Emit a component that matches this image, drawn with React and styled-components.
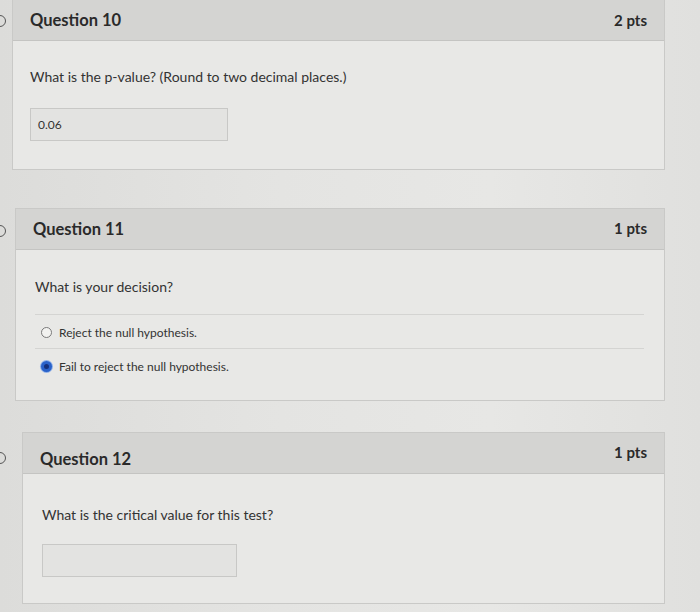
import React from 'react';
import styled, { createGlobalStyle } from 'styled-components';

const GlobalStyle = createGlobalStyle`
  html, body {
    margin: 0;
    padding: 0;
    background: #e3e3e1;
    font-family: Lato, "Open Sans", sans-serif;
    color: #2d2d2d;
  }
`;

const Page = styled.div`
  width: 700px;
  height: 612px;
  overflow: hidden;
  display: flex;
  flex-direction: column;
  background: linear-gradient(90deg, #dcdcda 0%, #e4e4e2 40%, #e7e7e5 70%, #e0e0de 100%);
`;

const Row = styled.div`
  position: relative;
  margin-top: ${p => p.top}px;
  padding-left: ${p => p.left}px;
  padding-right: ${p => p.right}px;
`;

// the partial flag icon cut at the left edge
const Flag = styled.div`
  position: absolute;
  left: -8px;
  top: ${p => p.y}px;
  width: 14px;
  height: 12px;
  border: 1.5px solid #555;
  border-radius: 0 7px 7px 0;
  box-sizing: border-box;
`;

const Card = styled.div`
  border: 1px solid #c9c9c7;
  background: #e8e8e6;
  height: ${p => p.h}px;
  box-sizing: border-box;
`;

const Header = styled.div`
  height: 41px;
  display: flex;
  justify-content: space-between;
  align-items: flex-start;
  padding: 0 17px 0 ${p => p.pl}px;
  background: #d4d4d2;
  border-bottom: 1px solid #c4c4c2;
  box-sizing: border-box;
`;

const Title = styled.div`
  font-size: 16.5px;
  font-weight: 700;
  color: #2a2a2a;
  margin-top: ${p => p.mt}px;
`;

const Pts = styled.div`
  font-size: 15px;
  font-weight: 700;
  color: #2a2a2a;
  margin-top: ${p => p.mt}px;
`;

const Body = styled.div`
  padding: ${p => p.pt}px 20px 0 ${p => p.pl}px;
`;

const Prompt = styled.div`
  font-size: 14px;
  color: #333;
  line-height: 18px;
`;

const Input = styled.div`
  margin-top: ${p => p.mt}px;
  width: ${p => p.w}px;
  height: 33px;
  border: 1px solid #c8c8c6;
  background: #e3e3e1;
  box-sizing: border-box;
  display: flex;
  align-items: center;
  padding-left: 7px;
  font-size: 12px;
  color: #333;
`;

const Options = styled.div`
  margin-top: 18px;
  border-top: 1px solid #d4d4d2;
`;

const Option = styled.div`
  display: flex;
  align-items: center;
  gap: 7px;
  height: 31px;
  padding-left: 6px;
  padding-top: 2px;
  border-bottom: ${p => (p.last ? 'none' : '1px solid #d4d4d2')};
  font-size: 12px;
  color: #333;
`;

const Radio = styled.span`
  width: 11px;
  height: 11px;
  border-radius: 50%;
  box-sizing: border-box;
  border: ${p => (p.checked ? '3px solid #2a62c9' : '1px solid #7a7a7a')};
  background: ${p => (p.checked ? '#15307a' : '#f2f2f0')};
  box-shadow: ${p => (p.checked ? '0 0 0 1px #8fb0e8' : 'none')};
`;

export default function App() {
  return (
    <Page>
      <GlobalStyle />
      <Row top={-1} left={12} right={35}>
        <Flag y={16} />
        <Card h={171}>
          <Header pl={17}>
            <Title mt={10}>Question 10</Title>
            <Pts mt={11}>2 pts</Pts>
          </Header>
          <Body pt={27} pl={17}>
            <Prompt>What is the p-value? (Round to two decimal places.)</Prompt>
            <Input mt={22} w={198}>0.06</Input>
          </Body>
        </Card>
      </Row>
      <Row top={38} left={15} right={35}>
        <Flag y={17} />
        <Card h={193}>
          <Header pl={17}>
            <Title mt={10}>Question 11</Title>
            <Pts mt={10}>1 pts</Pts>
          </Header>
          <Body pt={28} pl={19}>
            <Prompt>What is your decision?</Prompt>
            <Options>
              <Option>
                <Radio />
                Reject the null hypothesis.
              </Option>
              <Option last>
                <Radio checked />
                Fail to reject the null hypothesis.
              </Option>
            </Options>
          </Body>
        </Card>
      </Row>
      <Row top={31} left={22} right={35}>
        <Flag y={20} />
        <Card h={172}>
          <Header pl={17}>
            <Title mt={16}>Question 12</Title>
            <Pts mt={10}>1 pts</Pts>
          </Header>
          <Body pt={32} pl={19}>
            <Prompt>What is the critical value for this test?</Prompt>
            <Input mt={20} w={195} />
          </Body>
        </Card>
      </Row>
    </Page>
  );
}
